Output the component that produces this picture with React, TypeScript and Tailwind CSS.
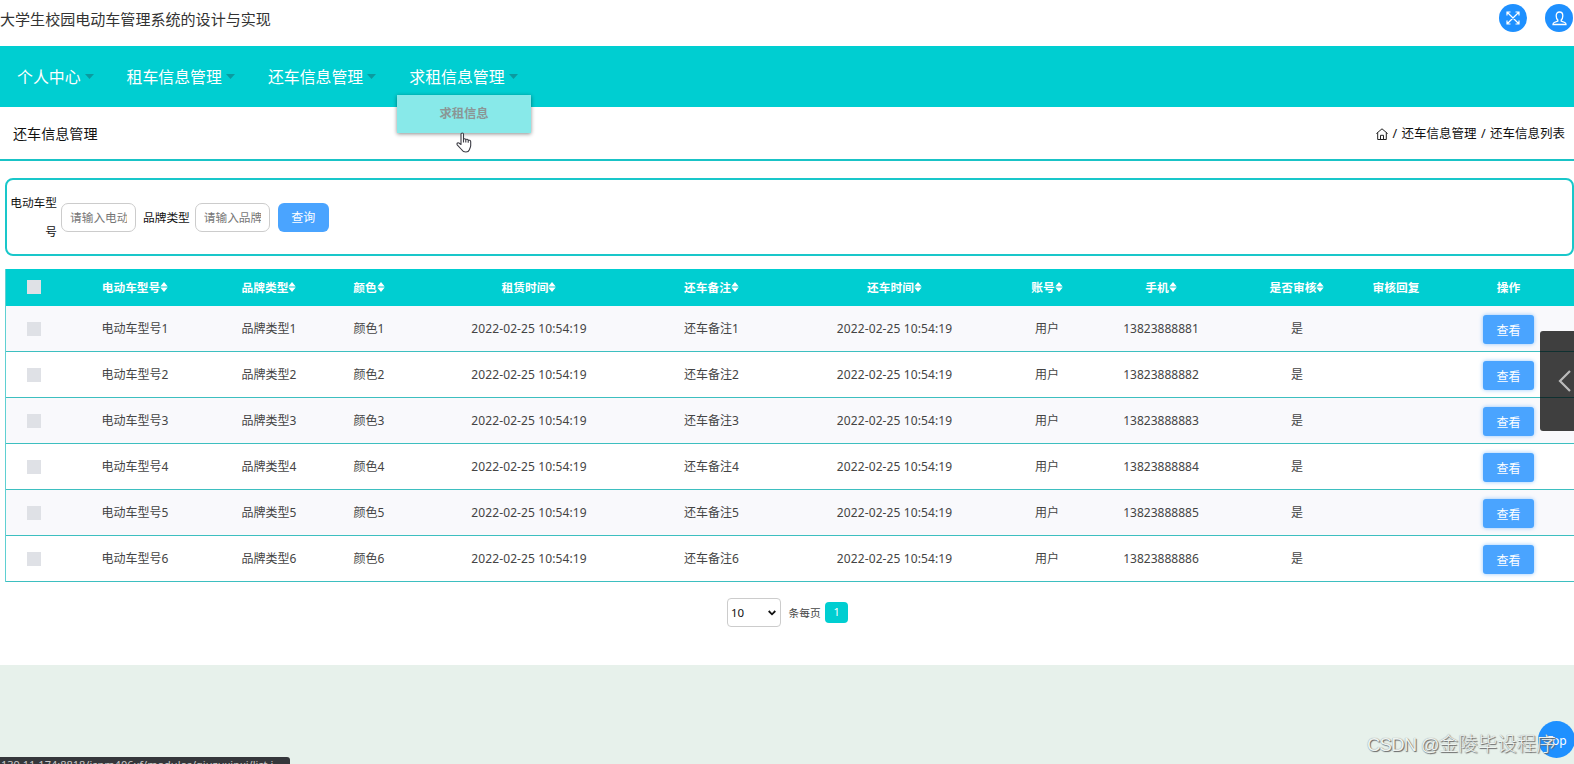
import React from "react";

const columns = [
  { title: "电动车型号", sort: true },
  { title: "品牌类型", sort: true },
  { title: "颜色", sort: true },
  { title: "租赁时间", sort: true },
  { title: "还车备注", sort: true },
  { title: "还车时间", sort: true },
  { title: "账号", sort: true },
  { title: "手机", sort: true },
  { title: "是否审核", sort: true },
  { title: "审核回复", sort: false },
  { title: "操作", sort: false },
];

const menus = ["个人中心", "租车信息管理", "还车信息管理", "求租信息管理"];

const rowGrid =
  "grid w-[1570px] grid-cols-[55px_148px_120px_80px_240px_125px_241px_64px_164px_108px_90px_135px] items-center justify-items-center";

function SortIcon() {
  return (
    <svg width="8" height="10" viewBox="0 0 8 10" className="shrink-0">
      <path d="M.3 4.500 4 0.100 7.700 4.500zM.3 5.500 4 9.900 7.700 5.500z" fill="#fff" />
    </svg>
  );
}

function ExpandIcon() {
  return (
    <svg width="14" height="14" viewBox="0 0 14 14" fill="none" stroke="#fff" strokeWidth="1.2">
      <path d="M1 4.500V1h3.500M9.500 1H13v3.500M13 9.500V13H9.500M4.500 13H1V9.500M1 1l12 12M13 1 1 13" />
    </svg>
  );
}

function UserIcon() {
  return (
    <svg width="15" height="15" viewBox="0 0 15 15" fill="none" stroke="#fff" strokeWidth="1.3">
      <path d="M5.800 8.900C4.600 8 4.200 6.500 4.200 4.700 4.200 2.500 5.500 1 7.500 1s3.300 1.500 3.300 3.700c0 1.800-.4 3.300-1.600 4.200v1.200l3.600 1.400c.8.300 1.200 1 1.200 2H1c0-1 .4-1.700 1.200-2l3.600-1.400z" />
    </svg>
  );
}

function HomeIcon() {
  return (
    <svg width="12" height="12" viewBox="0 0 12 12" fill="none" stroke="#222" strokeWidth="1" className="mb-[1px]">
      <path d="M.4 5.600 6 .8l5.600 4.800M1.700 4.700v6.800h8.600V4.700M4.500 11.500V7.300h3v4.200" />
    </svg>
  );
}

function HandCursor() {
  return (
    <svg width="16" height="21" viewBox="0 0 16 21" className="absolute left-[456px] top-[132px]">
      <path
        d="M5 12.500V2.200C5 .6 7.500.6 7.500 2.200V7.500C7.700 6.300 9.700 6.500 9.800 7.800 10.300 6.900 12.100 7.200 12.200 8.500 13 7.900 14.700 8.300 14.700 9.800V13.500C14.700 15.500 13.500 16.800 13.200 18 12.700 19.600 11.500 20 9.900 20 7.500 20 6.500 19.300 5.500 17.500L1.200 12.800C.5 11.300 2 10.200 3.300 11.200zM7.500 7.500v3M9.800 7.800v2.700M12.200 8.500v2.200"
        fill="#fff"
        stroke="#3c3c44"
        strokeWidth="1.100"
        strokeLinejoin="round"
      />
    </svg>
  );
}

export default function App() {
  return (
    <div className="relative flex h-[764px] w-[1574px] flex-col overflow-hidden bg-[#e7f1eb] font-['Noto_Sans','Noto_Sans_CJK_SC',sans-serif] text-[12px] text-[#444]">
      <div className="flex h-[665px] flex-col bg-white">
        <header className="flex h-[46px] shrink-0 items-start justify-between">
          <h1 className="mt-[6px] text-[15.050px] leading-[27px] font-normal text-[#333]">大学生校园电动车管理系统的设计与实现</h1>
          <div className="mt-[4px] mr-[1px] flex gap-[18px]">
            <div className="flex size-[28px] items-center justify-center rounded-full bg-[#1e90ff]">
              <ExpandIcon />
            </div>
            <div className="flex size-[28px] items-center justify-center rounded-full bg-[#1e90ff]">
              <UserIcon />
            </div>
          </div>
        </header>

        <nav className="flex h-[61px] shrink-0 items-center gap-[33px] bg-[#00ced1] pl-[17px] text-[15.900px] text-white">
          {menus.map((m) => (
            <div key={m} className="flex items-center gap-[4px]">
              <span className="leading-[24px]">{m}</span>
              <svg width="9" height="5" viewBox="0 0 9 5" className="mb-[1px]">
                <path d="M0 0h9L4.500 5z" fill="#0b9a9f" />
              </svg>
            </div>
          ))}
        </nav>

        <div className="flex h-[54px] shrink-0 items-center justify-between border-b-2 border-[#19c3c6] pr-[9px] pl-[13px] text-[#111]">
          <span className="pt-[1px] text-[14.100px]">还车信息管理</span>
          <div className="flex items-center gap-[4.400px] pt-[3px] text-[12.500px]">
            <HomeIcon />
            <span>/</span>
            <span>还车信息管理</span>
            <span>/</span>
            <span>还车信息列表</span>
          </div>
        </div>

        <div className="mt-[17px] ml-[5px] flex h-[78px] w-[1569px] shrink-0 items-center rounded-[8px] border-2 border-[#19c7ca] pl-[2px] text-[#111]">
          <div className="w-[48px] text-right text-[11.700px] leading-[29px]">电动车型号</div>
          <input
            className="ml-[4px] h-[29px] w-[75px] rounded-[7px] border border-[#ccc] px-[8px] text-[11.700px] placeholder-[#777]"
            placeholder="请输入电动车型号"
          />
          <span className="ml-[7px] pt-[1px] text-[11.700px]">品牌类型</span>
          <input
            className="ml-[5px] h-[29px] w-[75px] rounded-[7px] border border-[#ccc] px-[8px] text-[11.700px] placeholder-[#777]"
            placeholder="请输入品牌类型"
          />
          <button className="ml-[8px] h-[29px] w-[51px] rounded-[6px] bg-[#4aa4ff] pt-[2px] text-white">查询</button>
        </div>

        <div className="mt-[13px] ml-[5px] w-[1569px] shrink-0 overflow-hidden border-l border-[#5fd0d2]">
          <div className={`${rowGrid} h-[37px] bg-[#00ced1] text-[11.700px] font-bold text-white`}>
            <span className="mb-[1px] size-[14px] bg-[#dfe1e6]" />
            {columns.map((c) => (
              <span key={c.title} className="flex items-center">
                {c.title}
                {c.sort && <SortIcon />}
              </span>
            ))}
          </div>
          {[1, 2, 3, 4, 5, 6].map((n) => (
            <div key={n} className={`${rowGrid} h-[46px] border-b border-[#3dbfc0] odd:bg-white even:bg-[#f9f9fc]`}>
              <span className="size-[14px] bg-[#dfe1e6]" />
              <span>电动车型号{n}</span>
              <span>品牌类型{n}</span>
              <span>颜色{n}</span>
              <span className="tracking-[0.1px]">2022-02-25 10:54:19</span>
              <span>还车备注{n}</span>
              <span className="tracking-[0.1px]">2022-02-25 10:54:19</span>
              <span>用户</span>
              <span>1382388888{n}</span>
              <span>是</span>
              <span />
              <button className="mt-[2px] h-[29px] w-[51px] rounded-[3px] bg-[#4aa4ff] pt-[2px] text-white shadow-[0_0_4px_#4aa4ff99]">
                查看
              </button>
            </div>
          ))}
        </div>

        <div className="mt-[16px] flex items-center pl-[727px]">
          <div className="flex h-[29px] w-[54px] items-center justify-between rounded-[4px] border border-[#ccc] pr-[4px] pl-[3px] text-[11.500px] text-[#111]">
            10
            <svg width="8" height="6" viewBox="0 0 8 6" fill="none" stroke="#111" strokeWidth="1.800">
              <path d="M.7 1 4 4.300 7.300 1" />
            </svg>
          </div>
          <span className="ml-[7.500px] pt-[1px] text-[10.700px]">条每页</span>
          <span className="ml-[4.500px] flex h-[21px] w-[23px] items-center justify-center rounded-[4px] bg-[#00ced1] text-[11px] text-white">
            1
          </span>
        </div>
      </div>

      <div className="absolute top-[95px] left-[397px] flex h-[38px] w-[134px] items-center justify-center bg-[#88e9e9] text-[12.300px] font-bold text-[#8b9696] shadow-[0_1px_4px_rgba(0,0,0,0.45)]">
        求租信息
      </div>
      <HandCursor />

      <div className="absolute top-[331px] left-[1540px] flex h-[100px] w-[34px] items-center justify-end rounded-l-[3px] bg-black/75 pr-[3px]">
        <svg width="13" height="22" viewBox="0 0 13 22" fill="none" stroke="#bbb" strokeWidth="2.200">
          <path d="M12 1 2 11l10 10" />
        </svg>
      </div>

      <div className="absolute top-[721px] left-[1538px] flex size-[37px] items-center justify-center rounded-full bg-[#1e90ff] pt-[2px] text-[12px] text-white">
        Top
      </div>
      <div className="absolute top-[730px] left-[1367px] font-['Liberation_Sans','Noto_Sans_CJK_SC',sans-serif] text-[19.500px] leading-[29px] font-light whitespace-nowrap text-[#eef3f0] [text-shadow:1px_1px_1px_#666,0_0_1px_#888]">
        <span className="text-[18.500px] tracking-[-0.750px]">CSDN @</span>
        金陵毕设程序
      </div>
      <div className="absolute top-[757px] left-0 h-[7px] w-[290px] overflow-hidden rounded-tr-[3px] bg-[#35373b] pl-[1px] text-[11px] leading-[16px] whitespace-nowrap text-[#c8c8c8]">
        139.11.174:8818/jspm406xf/modules/qiuzuxinxi/list.j
      </div>
    </div>
  );
}
